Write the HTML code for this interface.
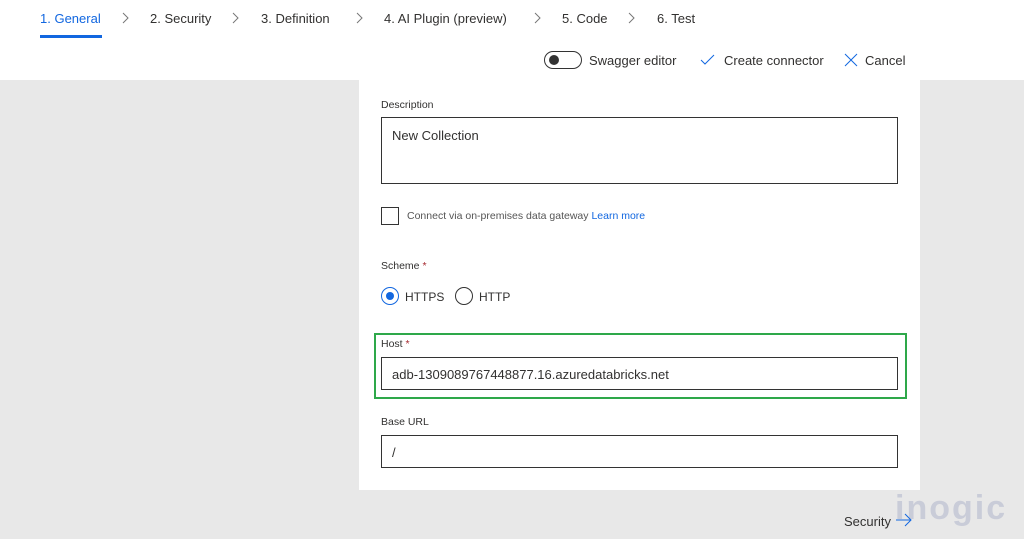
<!DOCTYPE html>
<html><head><style>
*{margin:0;padding:0;box-sizing:border-box}
body{width:1024px;height:539px;background:#e8e8e8;font-family:"Liberation Sans",sans-serif;position:relative;overflow:hidden;color:#323130}
.hdr{position:absolute;left:0;top:0;width:1024px;height:80px;background:#fff}
.t{position:absolute;font-size:13px;white-space:nowrap}
.panel{position:absolute;left:359px;top:80px;width:561px;height:410px;background:#fff}
.lbl{position:absolute;font-size:10.5px;color:#323130}
.box{position:absolute;border:1px solid #333;background:#fff;font-size:13px;padding-left:10px}
</style></head><body>
<div class="hdr">
<div class="t" style="left:40px;top:11px;color:#1267e0">1. General</div>
<div style="position:absolute;left:40px;top:35px;width:62px;height:3px;background:#1267e0"></div>
<svg style="position:absolute;left:0;top:0" width="720" height="40"><g stroke="#777" fill="none" stroke-width="1"><path d="M123 13l5 5-5 5M233 13l5 5-5 5M357 13l5 5-5 5M535 13l5 5-5 5M629 13l5 5-5 5"/></g></svg>
<div class="t" style="left:150px;top:11px">2. Security</div>
<div class="t" style="left:261px;top:11px">3. Definition</div>
<div class="t" style="left:384px;top:11px">4. AI Plugin (preview)</div>
<div class="t" style="left:562px;top:11px">5. Code</div>
<div class="t" style="left:657px;top:11px">6. Test</div>
<div style="position:absolute;left:544px;top:51px;width:38px;height:18px;border:1px solid #333;border-radius:9px"></div>
<div style="position:absolute;left:549px;top:55px;width:10px;height:10px;border-radius:5px;background:#333"></div>
<div class="t" style="left:589px;top:53px">Swagger editor</div>
<svg style="position:absolute;left:700px;top:53px" width="16" height="14"><path d="M1 7l4 4 9-9" stroke="#1267e0" fill="none"/></svg>
<div class="t" style="left:724px;top:53px">Create connector</div>
<svg style="position:absolute;left:844px;top:53px" width="14" height="14"><path d="M1 1l12 12M13 1L1 13" stroke="#1267e0" fill="none"/></svg>
<div class="t" style="left:865px;top:53px">Cancel</div>
</div>
<div class="panel"></div>
<div class="lbl" style="left:381px;top:99px">Description</div>
<div class="box" style="left:381px;top:117px;width:517px;height:67px;padding-top:10px">New Collection</div>
<div style="position:absolute;left:381px;top:207px;width:18px;height:18px;border:1px solid #333"></div>
<div class="lbl" style="left:407px;top:210px;color:#555">Connect via on-premises data gateway <span style="color:#1267e0">Learn more</span></div>
<div class="lbl" style="left:381px;top:260px">Scheme <span style="color:#a4262c">*</span></div>
<div style="position:absolute;left:381px;top:287px;width:18px;height:18px;border:1px solid #1267e0;border-radius:50%"></div>
<div style="position:absolute;left:386px;top:292px;width:8px;height:8px;background:#1267e0;border-radius:50%"></div>
<div class="lbl" style="left:405px;top:290px;font-size:12px">HTTPS</div>
<div style="position:absolute;left:455px;top:287px;width:18px;height:18px;border:1px solid #333;border-radius:50%"></div>
<div class="lbl" style="left:479px;top:290px;font-size:12px">HTTP</div>
<div style="position:absolute;left:374px;top:333px;width:533px;height:66px;border:2px solid #2ea84a"></div>
<div class="lbl" style="left:381px;top:338px">Host <span style="color:#a4262c">*</span></div>
<div class="box" style="left:381px;top:357px;width:517px;height:33px;padding-top:9px">adb-1309089767448877.16.azuredatabricks.net</div>
<div class="lbl" style="left:381px;top:416px">Base URL</div>
<div class="box" style="left:381px;top:435px;width:517px;height:33px;padding-top:9px">/</div>
<div style="position:absolute;left:895px;top:489px;font-size:34px;font-weight:bold;color:#c9ccd8;letter-spacing:2px">inogic</div>
<div class="t" style="left:844px;top:514px">Security</div>
<svg style="position:absolute;left:895px;top:512px" width="18" height="16"><path d="M1 8h15M10 2l6 6-6 6" stroke="#1267e0" fill="none"/></svg>
</body></html>
